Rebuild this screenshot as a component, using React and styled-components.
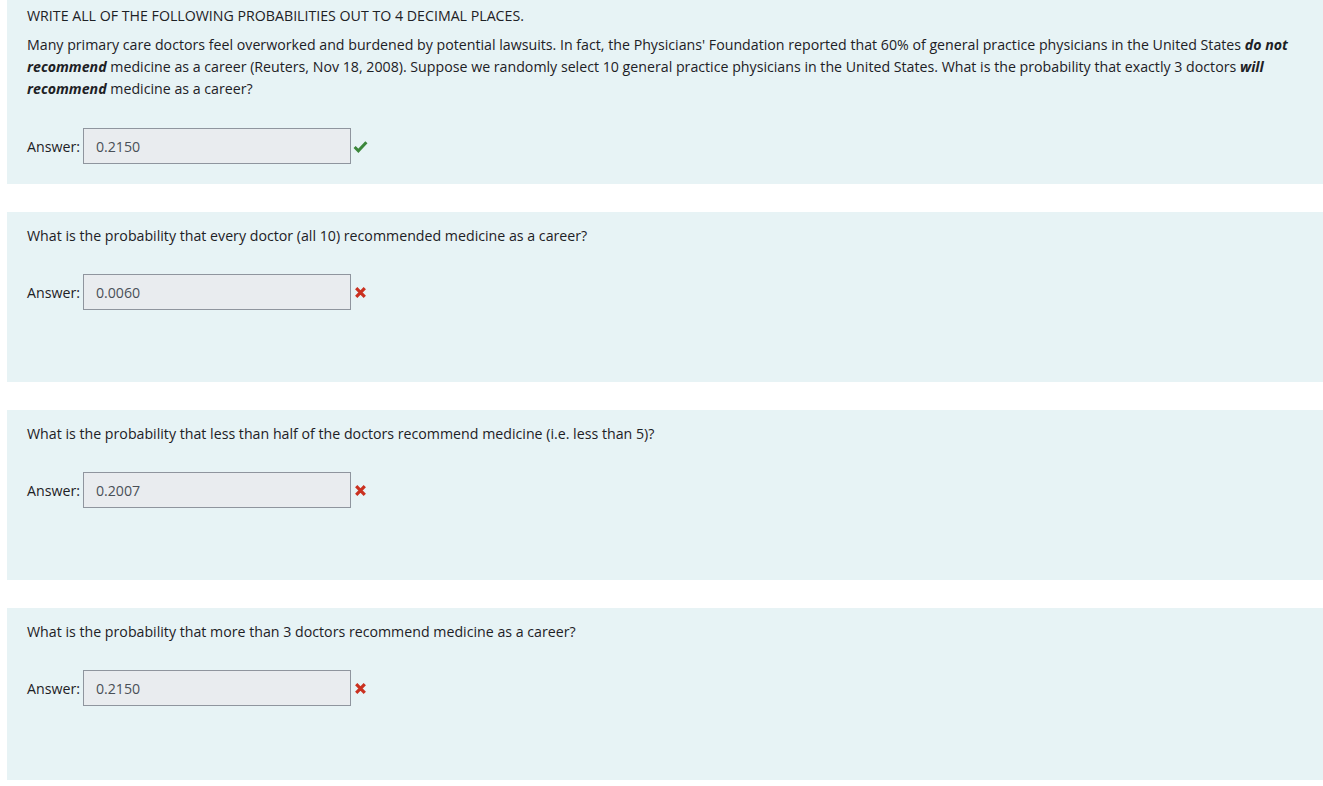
import React from "react";
import styled, { createGlobalStyle } from "styled-components";

const GlobalStyle = createGlobalStyle`
  body {
    margin: 0;
    background: #ffffff;
    font-family: "Open Sans", "Noto Sans", sans-serif;
    font-size: 14.2px;
    color: #1d2125;
  }
`;

const Page = styled.div`
  display: flex;
  flex-direction: column;
  gap: 28px;
  padding: 0 0 6px 7px;
`;

const Panel = styled.div`
  background: #e7f3f5;
  padding: ${({ top }) => top}px 20px 0 20px;
  min-height: ${({ height }) => height}px;
  box-sizing: border-box;
`;

const Heading = styled.div`
  line-height: 22px;
  margin-bottom: 7px;
`;

const Text = styled.p`
  margin: 0;
  line-height: 22px;
`;

const Answer = styled.div`
  display: flex;
  align-items: center;
  margin-top: ${({ gap }) => gap}px;
`;

const Label = styled.span`
  margin-right: 3px;
`;

const Input = styled.div`
  width: 268px;
  height: 36px;
  box-sizing: border-box;
  border: 1px solid #8f959e;
  background: #e9ecef;
  color: #495057;
  padding: 0 12px;
  display: flex;
  align-items: center;
`;

const Mark = styled.svg`
  margin-left: 2px;
  width: 15px;
  height: 15px;
`;

const Check = () => (
  <Mark viewBox="0 0 14 14">
    <path d="M1.5 7.5 L5 11 L12.5 3" fill="none" stroke="#3b873b" strokeWidth="2.8" />
  </Mark>
);

const Cross = () => (
  <Mark viewBox="0 0 14 14">
    <path d="M3 3 L11 11 M11 3 L3 11" fill="none" stroke="#ca3120" strokeWidth="3" />
  </Mark>
);

const AnswerRow = ({ value, correct, gap = 27 }) => (
  <Answer gap={gap}>
    <Label>Answer:</Label>
    <Input>{value}</Input>
    {correct ? <Check /> : <Cross />}
  </Answer>
);

const questions = [
  {
    text: "What is the probability that every doctor (all 10) recommended medicine as a career?",
    value: "0.0060",
  },
  {
    text: "What is the probability that less than half of the doctors recommend medicine (i.e. less than 5)?",
    value: "0.2007",
  },
  {
    text: "What is the probability that more than 3 doctors recommend medicine as a career?",
    value: "0.2150",
  },
];

export default function App() {
  return (
    <>
      <GlobalStyle />
      <Page>
        <Panel top={5} height={184}>
          <Heading>WRITE ALL OF THE FOLLOWING PROBABILITIES OUT TO 4 DECIMAL PLACES.</Heading>
          <Text>
            Many primary care doctors feel overworked and burdened by potential lawsuits. In fact, the
            Physicians' Foundation reported that 60% of general practice physicians in the United States{" "}
            <b><i>do not</i></b>
            <br />
            <b><i>recommend</i></b> medicine as a career (Reuters, Nov 18, 2008). Suppose we randomly
            select 10 general practice physicians in the United States. What is the probability that exactly 3
            doctors <b><i>will</i></b>
            <br />
            <b><i>recommend</i></b> medicine as a career?
          </Text>
          <AnswerRow value="0.2150" correct gap={28} />
        </Panel>
        {questions.map((q, i) => (
          <Panel key={i} top={13} height={i === 2 ? 172 : 170}>
            <Text>{q.text}</Text>
            <AnswerRow value={q.value} />
          </Panel>
        ))}
      </Page>
    </>
  );
}
